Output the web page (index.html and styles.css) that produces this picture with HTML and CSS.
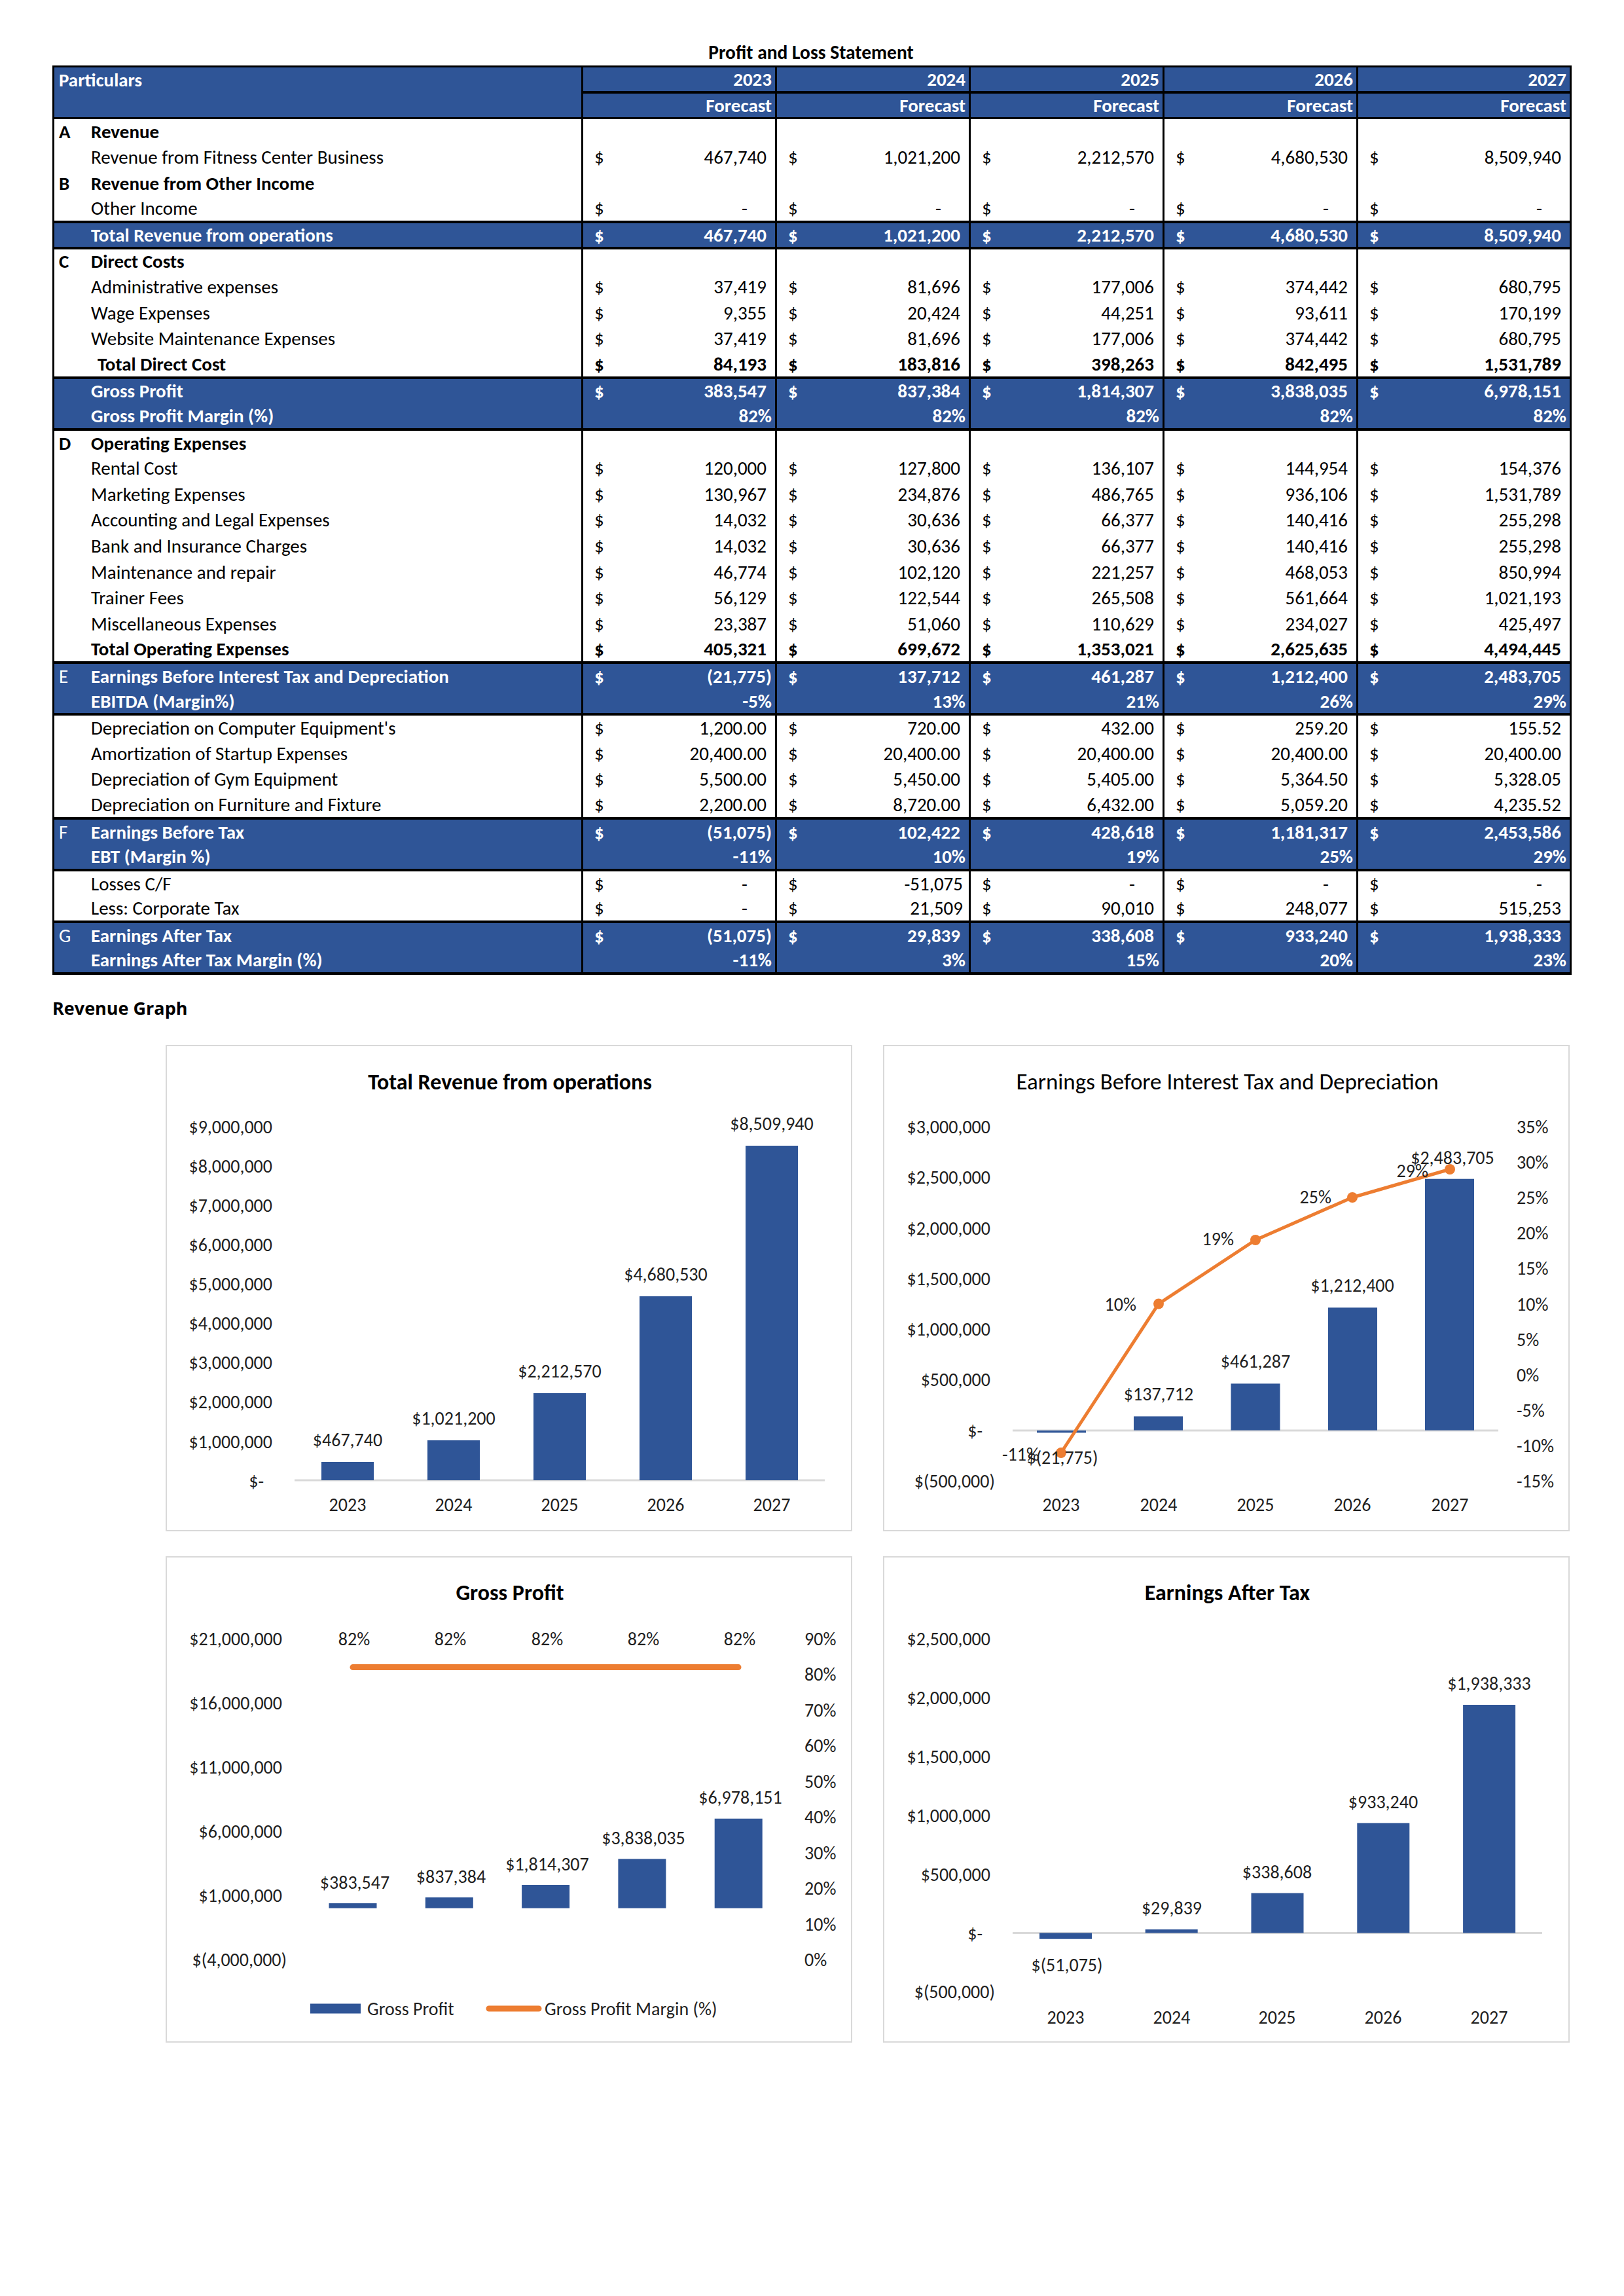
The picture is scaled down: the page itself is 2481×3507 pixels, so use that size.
FILE: index.html
```html
<!DOCTYPE html>
<html lang="en">
<head>
    <meta charset="UTF-8">
    <title>Profit and Loss Statement</title>
    <link rel="stylesheet" href="styles.css">
</head>
<body>
<div class="page">
    <div class="sheet-title">Profit and Loss Statement</div>

    <table class="pl">
        <colgroup>
            <col class="c-part"><col class="c-yr"><col class="c-yr"><col class="c-yr"><col class="c-yr"><col class="c-last">
        </colgroup>
        <thead>
            <tr class="head1">
                <th class="part" rowspan="2">Particulars</th>
                <th>2023</th><th>2024</th><th>2025</th><th>2026</th><th>2027</th>
            </tr>
            <tr class="head2">
                <th>Forecast</th><th>Forecast</th><th>Forecast</th><th>Forecast</th><th>Forecast</th>
            </tr>
        </thead>
        <tbody>
            <tr class="sec"><td><span class="ltr">A</span>Revenue</td><td></td><td></td><td></td><td></td><td></td></tr>
            <tr><td><span class="ltr"></span>Revenue from Fitness Center Business</td>
                <td><span class="cur">$</span>467,740</td><td><span class="cur">$</span>1,021,200</td><td><span class="cur">$</span>2,212,570</td><td><span class="cur">$</span>4,680,530</td><td><span class="cur">$</span>8,509,940</td></tr>
            <tr class="sec"><td><span class="ltr">B</span>Revenue from Other Income</td><td></td><td></td><td></td><td></td><td></td></tr>
            <tr><td><span class="ltr"></span>Other Income</td>
                <td class="dash"><span class="cur">$</span>-</td><td class="dash"><span class="cur">$</span>-</td><td class="dash"><span class="cur">$</span>-</td><td class="dash"><span class="cur">$</span>-</td><td class="dash"><span class="cur">$</span>-</td></tr>
            <tr class="blue bt bb"><td><span class="ltr"></span>Total Revenue from operations</td>
                <td><span class="cur">$</span>467,740</td><td><span class="cur">$</span>1,021,200</td><td><span class="cur">$</span>2,212,570</td><td><span class="cur">$</span>4,680,530</td><td><span class="cur">$</span>8,509,940</td></tr>

            <tr class="sec"><td><span class="ltr">C</span>Direct Costs</td><td></td><td></td><td></td><td></td><td></td></tr>
            <tr><td><span class="ltr"></span>Administrative expenses</td>
                <td><span class="cur">$</span>37,419</td><td><span class="cur">$</span>81,696</td><td><span class="cur">$</span>177,006</td><td><span class="cur">$</span>374,442</td><td><span class="cur">$</span>680,795</td></tr>
            <tr><td><span class="ltr"></span>Wage Expenses</td>
                <td><span class="cur">$</span>9,355</td><td><span class="cur">$</span>20,424</td><td><span class="cur">$</span>44,251</td><td><span class="cur">$</span>93,611</td><td><span class="cur">$</span>170,199</td></tr>
            <tr><td><span class="ltr"></span>Website Maintenance Expenses</td>
                <td><span class="cur">$</span>37,419</td><td><span class="cur">$</span>81,696</td><td><span class="cur">$</span>177,006</td><td><span class="cur">$</span>374,442</td><td><span class="cur">$</span>680,795</td></tr>
            <tr class="total"><td><span class="ltr"></span><span class="indent">Total Direct Cost</span></td>
                <td><span class="cur">$</span>84,193</td><td><span class="cur">$</span>183,816</td><td><span class="cur">$</span>398,263</td><td><span class="cur">$</span>842,495</td><td><span class="cur">$</span>1,531,789</td></tr>
            <tr class="blue bt"><td><span class="ltr"></span>Gross Profit</td>
                <td><span class="cur">$</span>383,547</td><td><span class="cur">$</span>837,384</td><td><span class="cur">$</span>1,814,307</td><td><span class="cur">$</span>3,838,035</td><td><span class="cur">$</span>6,978,151</td></tr>
            <tr class="blue bb"><td><span class="ltr"></span>Gross Profit Margin (%)</td>
                <td class="pct">82%</td><td class="pct">82%</td><td class="pct">82%</td><td class="pct">82%</td><td class="pct">82%</td></tr>

            <tr class="sec"><td><span class="ltr">D</span>Operating Expenses</td><td></td><td></td><td></td><td></td><td></td></tr>
            <tr><td><span class="ltr"></span>Rental Cost</td>
                <td><span class="cur">$</span>120,000</td><td><span class="cur">$</span>127,800</td><td><span class="cur">$</span>136,107</td><td><span class="cur">$</span>144,954</td><td><span class="cur">$</span>154,376</td></tr>
            <tr><td><span class="ltr"></span>Marketing Expenses</td>
                <td><span class="cur">$</span>130,967</td><td><span class="cur">$</span>234,876</td><td><span class="cur">$</span>486,765</td><td><span class="cur">$</span>936,106</td><td><span class="cur">$</span>1,531,789</td></tr>
            <tr><td><span class="ltr"></span>Accounting and Legal Expenses</td>
                <td><span class="cur">$</span>14,032</td><td><span class="cur">$</span>30,636</td><td><span class="cur">$</span>66,377</td><td><span class="cur">$</span>140,416</td><td><span class="cur">$</span>255,298</td></tr>
            <tr><td><span class="ltr"></span>Bank and Insurance Charges</td>
                <td><span class="cur">$</span>14,032</td><td><span class="cur">$</span>30,636</td><td><span class="cur">$</span>66,377</td><td><span class="cur">$</span>140,416</td><td><span class="cur">$</span>255,298</td></tr>
            <tr><td><span class="ltr"></span>Maintenance and repair</td>
                <td><span class="cur">$</span>46,774</td><td><span class="cur">$</span>102,120</td><td><span class="cur">$</span>221,257</td><td><span class="cur">$</span>468,053</td><td><span class="cur">$</span>850,994</td></tr>
            <tr><td><span class="ltr"></span>Trainer Fees</td>
                <td><span class="cur">$</span>56,129</td><td><span class="cur">$</span>122,544</td><td><span class="cur">$</span>265,508</td><td><span class="cur">$</span>561,664</td><td><span class="cur">$</span>1,021,193</td></tr>
            <tr><td><span class="ltr"></span>Miscellaneous Expenses</td>
                <td><span class="cur">$</span>23,387</td><td><span class="cur">$</span>51,060</td><td><span class="cur">$</span>110,629</td><td><span class="cur">$</span>234,027</td><td><span class="cur">$</span>425,497</td></tr>
            <tr class="total"><td><span class="ltr"></span>Total Operating Expenses</td>
                <td><span class="cur">$</span>405,321</td><td><span class="cur">$</span>699,672</td><td><span class="cur">$</span>1,353,021</td><td><span class="cur">$</span>2,625,635</td><td><span class="cur">$</span>4,494,445</td></tr>

            <tr class="blue bt"><td><span class="ltr">E</span>Earnings Before Interest Tax and Depreciation</td>
                <td class="neg"><span class="cur">$</span>(21,775)</td><td><span class="cur">$</span>137,712</td><td><span class="cur">$</span>461,287</td><td><span class="cur">$</span>1,212,400</td><td><span class="cur">$</span>2,483,705</td></tr>
            <tr class="blue bb"><td><span class="ltr"></span>EBITDA (Margin%)</td>
                <td class="pct">-5%</td><td class="pct">13%</td><td class="pct">21%</td><td class="pct">26%</td><td class="pct">29%</td></tr>
            <tr><td><span class="ltr"></span>Depreciation on Computer Equipment's</td>
                <td><span class="cur">$</span>1,200.00</td><td><span class="cur">$</span>720.00</td><td><span class="cur">$</span>432.00</td><td><span class="cur">$</span>259.20</td><td><span class="cur">$</span>155.52</td></tr>
            <tr><td><span class="ltr"></span>Amortization of Startup Expenses</td>
                <td><span class="cur">$</span>20,400.00</td><td><span class="cur">$</span>20,400.00</td><td><span class="cur">$</span>20,400.00</td><td><span class="cur">$</span>20,400.00</td><td><span class="cur">$</span>20,400.00</td></tr>
            <tr><td><span class="ltr"></span>Depreciation of Gym Equipment</td>
                <td><span class="cur">$</span>5,500.00</td><td><span class="cur">$</span>5,450.00</td><td><span class="cur">$</span>5,405.00</td><td><span class="cur">$</span>5,364.50</td><td><span class="cur">$</span>5,328.05</td></tr>
            <tr><td><span class="ltr"></span>Depreciation on Furniture and Fixture</td>
                <td><span class="cur">$</span>2,200.00</td><td><span class="cur">$</span>8,720.00</td><td><span class="cur">$</span>6,432.00</td><td><span class="cur">$</span>5,059.20</td><td><span class="cur">$</span>4,235.52</td></tr>

            <tr class="blue bt"><td><span class="ltr">F</span>Earnings Before Tax</td>
                <td class="neg"><span class="cur">$</span>(51,075)</td><td><span class="cur">$</span>102,422</td><td><span class="cur">$</span>428,618</td><td><span class="cur">$</span>1,181,317</td><td><span class="cur">$</span>2,453,586</td></tr>
            <tr class="blue bb"><td><span class="ltr"></span>EBT (Margin %)</td>
                <td class="pct">-11%</td><td class="pct">10%</td><td class="pct">19%</td><td class="pct">25%</td><td class="pct">29%</td></tr>
            <tr><td><span class="ltr"></span>Losses C/F</td>
                <td class="dash"><span class="cur">$</span>-</td><td class="gen"><span class="cur">$</span>-51,075</td><td class="dash"><span class="cur">$</span>-</td><td class="dash"><span class="cur">$</span>-</td><td class="dash"><span class="cur">$</span>-</td></tr>
            <tr><td><span class="ltr"></span>Less: Corporate Tax</td>
                <td class="dash"><span class="cur">$</span>-</td><td class="gen"><span class="cur">$</span>21,509</td><td><span class="cur">$</span>90,010</td><td><span class="cur">$</span>248,077</td><td><span class="cur">$</span>515,253</td></tr>

            <tr class="blue bt"><td><span class="ltr">G</span>Earnings After Tax</td>
                <td class="neg"><span class="cur">$</span>(51,075)</td><td><span class="cur">$</span>29,839</td><td><span class="cur">$</span>338,608</td><td><span class="cur">$</span>933,240</td><td><span class="cur">$</span>1,938,333</td></tr>
            <tr class="blue bb"><td><span class="ltr"></span>Earnings After Tax Margin (%)</td>
                <td class="pct">-11%</td><td class="pct">3%</td><td class="pct">15%</td><td class="pct">20%</td><td class="pct">23%</td></tr>
        </tbody>
    </table>

    <h2 class="graph-title">Revenue Graph</h2>

    <div class="charts">
        <!-- Total Revenue -->
        <div class="chart">
            <svg width="1045" height="739" viewBox="0 0 1045 739">
                <text class="ttl bold" x="524" y="54">Total Revenue from operations</text>
                <g class="axl">
                    <text x="161" y="123">$9,000,000</text>
                    <text x="161" y="183">$8,000,000</text>
                    <text x="161" y="243">$7,000,000</text>
                    <text x="161" y="303">$6,000,000</text>
                    <text x="161" y="363">$5,000,000</text>
                    <text x="161" y="423">$4,000,000</text>
                    <text x="161" y="483">$3,000,000</text>
                    <text x="161" y="543">$2,000,000</text>
                    <text x="161" y="604">$1,000,000</text>
                    <text x="148" y="664">$-</text>
                </g>
                <line class="axis" x1="195" y1="663" x2="1005" y2="663"/>
                <g class="bar">
                    <rect x="236" y="635" width="80" height="28"/>
                    <rect x="398" y="602" width="80" height="61"/>
                    <rect x="560" y="530" width="80" height="133"/>
                    <rect x="722" y="382" width="80" height="281"/>
                    <rect x="884" y="152" width="80" height="511"/>
                </g>
                <g class="lbl">
                    <text x="276" y="601">$467,740</text>
                    <text x="438" y="568">$1,021,200</text>
                    <text x="600" y="496">$2,212,570</text>
                    <text x="762" y="348">$4,680,530</text>
                    <text x="924" y="118">$8,509,940</text>
                </g>
                <g class="lbl">
                    <text x="276" y="700">2023</text>
                    <text x="438" y="700">2024</text>
                    <text x="600" y="700">2025</text>
                    <text x="762" y="700">2026</text>
                    <text x="924" y="700">2027</text>
                </g>
            </svg>
        </div>

        <!-- EBITDA -->
        <div class="chart">
            <svg width="1045" height="739" viewBox="0 0 1045 739">
                <text class="ttl" x="524" y="54">Earnings Before Interest Tax and Depreciation</text>
                <g class="axl">
                    <text x="162" y="123">$3,000,000</text>
                    <text x="162" y="200">$2,500,000</text>
                    <text x="162" y="278">$2,000,000</text>
                    <text x="162" y="355">$1,500,000</text>
                    <text x="162" y="432">$1,000,000</text>
                    <text x="162" y="509">$500,000</text>
                    <text x="150" y="587">$-</text>
                    <text x="169" y="664">$(500,000)</text>
                </g>
                <g class="axr">
                    <text x="966" y="123">35%</text>
                    <text x="966" y="177">30%</text>
                    <text x="966" y="231">25%</text>
                    <text x="966" y="285">20%</text>
                    <text x="966" y="339">15%</text>
                    <text x="966" y="394">10%</text>
                    <text x="966" y="448">5%</text>
                    <text x="966" y="502">0%</text>
                    <text x="966" y="556">-5%</text>
                    <text x="966" y="610">-10%</text>
                    <text x="966" y="664">-15%</text>
                </g>
                <line class="axis" x1="196" y1="587" x2="938" y2="587"/>
                <g class="bar">
                    <rect x="233" y="587" width="75" height="3.4"/>
                    <rect x="381" y="565.4" width="75" height="21.3"/>
                    <rect x="529.5" y="515.4" width="75" height="71.3"/>
                    <rect x="678" y="399.3" width="75" height="187.4"/>
                    <rect x="826" y="202.7" width="75" height="384"/>
                </g>
                <polyline class="ln" points="270,621 419,393.5 567,296 715,231 864,188"/>
                <g class="dot">
                    <circle cx="270" cy="621" r="8"/>
                    <circle cx="419" cy="393.5" r="8"/>
                    <circle cx="567" cy="296" r="8"/>
                    <circle cx="715" cy="231" r="8"/>
                    <circle cx="864" cy="188" r="8"/>
                </g>
                <g class="lbl">
                    <text x="272" y="628">$(21,775)</text>
                    <text x="419" y="531">$137,712</text>
                    <text x="567" y="481">$461,287</text>
                    <text x="715" y="365">$1,212,400</text>
                    <text x="868" y="170">$2,483,705</text>
                </g>
                <g class="lbl-l">
                    <text x="237" y="623">-11%</text>
                    <text x="385" y="394">10%</text>
                    <text x="534" y="294">19%</text>
                    <text x="683" y="230">25%</text>
                    <text x="831" y="190">29%</text>
                </g>
                <g class="lbl">
                    <text x="270" y="700">2023</text>
                    <text x="419" y="700">2024</text>
                    <text x="567" y="700">2025</text>
                    <text x="715" y="700">2026</text>
                    <text x="864" y="700">2027</text>
                </g>
            </svg>
        </div>

        <!-- Gross Profit -->
        <div class="chart">
            <svg width="1045" height="739" viewBox="0 0 1045 739">
                <text class="ttl bold" x="524" y="53">Gross Profit</text>
                <g class="axl">
                    <text x="176" y="124">$21,000,000</text>
                    <text x="176" y="222">$16,000,000</text>
                    <text x="176" y="320">$11,000,000</text>
                    <text x="176" y="418">$6,000,000</text>
                    <text x="176" y="516">$1,000,000</text>
                    <text x="183" y="614">$(4,000,000)</text>
                </g>
                <g class="axr">
                    <text x="974" y="124">90%</text>
                    <text x="974" y="178">80%</text>
                    <text x="974" y="233">70%</text>
                    <text x="974" y="287">60%</text>
                    <text x="974" y="342">50%</text>
                    <text x="974" y="396">40%</text>
                    <text x="974" y="451">30%</text>
                    <text x="974" y="505">20%</text>
                    <text x="974" y="560">10%</text>
                    <text x="974" y="614">0%</text>
                </g>
                <g class="bar">
                    <rect x="247.5" y="528.1" width="73" height="7.5"/>
                    <rect x="394.8" y="519.2" width="73" height="16.4"/>
                    <rect x="542.1" y="500" width="73" height="35.6"/>
                    <rect x="689.4" y="460.4" width="73" height="75.2"/>
                    <rect x="836.7" y="398.8" width="73" height="136.8"/>
                </g>
                <line class="ln thick" x1="284" y1="167.6" x2="873" y2="167.6"/>
                <g class="lbl">
                    <text x="287" y="496">$383,547</text>
                    <text x="434" y="487">$837,384</text>
                    <text x="581" y="468">$1,814,307</text>
                    <text x="728" y="428">$3,838,035</text>
                    <text x="876" y="366">$6,978,151</text>
                </g>
                <g class="lbl">
                    <text x="286" y="124">82%</text>
                    <text x="433" y="124">82%</text>
                    <text x="581" y="124">82%</text>
                    <text x="728" y="124">82%</text>
                    <text x="875" y="124">82%</text>
                </g>
                <rect class="bar" x="219" y="681.5" width="77" height="15"/>
                <text class="leg" x="306" y="689">Gross Profit</text>
                <line class="ln thick" x1="492" y1="689" x2="568" y2="689"/>
                <text class="leg" x="577" y="689">Gross Profit Margin (%)</text>
            </svg>
        </div>

        <!-- Earnings After Tax -->
        <div class="chart">
            <svg width="1045" height="739" viewBox="0 0 1045 739">
                <text class="ttl bold" x="524" y="53">Earnings After Tax</text>
                <g class="axl">
                    <text x="162" y="124">$2,500,000</text>
                    <text x="162" y="214">$2,000,000</text>
                    <text x="162" y="304">$1,500,000</text>
                    <text x="162" y="394">$1,000,000</text>
                    <text x="162" y="484">$500,000</text>
                    <text x="150" y="574">$-</text>
                    <text x="169" y="663">$(500,000)</text>
                </g>
                <line class="axis" x1="196" y1="573.5" x2="1005" y2="573.5"/>
                <g class="bar">
                    <rect x="237" y="573.5" width="80" height="9.2"/>
                    <rect x="398.7" y="568.1" width="80" height="5.4"/>
                    <rect x="560.5" y="512.6" width="80" height="60.9"/>
                    <rect x="722.3" y="405.7" width="80" height="167.8"/>
                    <rect x="884.1" y="225" width="80" height="348.5"/>
                </g>
                <g class="lbl">
                    <text x="279" y="622">$(51,075)</text>
                    <text x="439" y="535">$29,839</text>
                    <text x="600" y="480">$338,608</text>
                    <text x="762" y="373">$933,240</text>
                    <text x="924" y="192">$1,938,333</text>
                </g>
                <g class="lbl">
                    <text x="277" y="702">2023</text>
                    <text x="439" y="702">2024</text>
                    <text x="600" y="702">2025</text>
                    <text x="762" y="702">2026</text>
                    <text x="924" y="702">2027</text>
                </g>
            </svg>
        </div>
    </div>
</div>
</body>
</html>
```

FILE: styles.css
```css
body {
    margin: 0;
    padding: 0;
    background: #fff;
    color: #000;
    font-family: Carlito, Lato, "Liberation Sans", sans-serif;
}
.page {
    width: 2318px;
    padding: 62px 0 0 80px;
}
.sheet-title {
    text-align: center;
    font-weight: bold;
    font-size: 29.5px;
    line-height: 36px;
    height: 38px;
}

/* table */
.pl {
    width: 2318px;
    table-layout: fixed;
    border-collapse: collapse;
    border: 3px solid #000;
    font-size: 29px;
}
.c-part { width: 808px; }
.c-yr { width: 296px; }
.c-last { width: 326px; }
.pl tr {
    height: 39.6px;
}
.pl th, .pl td {
    padding: 0 13px 0 17px;
    line-height: 30px;
    white-space: nowrap;
    vertical-align: middle;
}
.pl td:first-child {
    padding-left: 7px;
    text-align: left;
}
.pl td + td, .pl th + th {
    border-left: 3px solid #000;
    text-align: right;
}
.pl th {
    background: #2f5597;
    color: #fff;
    font-weight: bold;
    text-align: right;
    padding-right: 5px;
}
.pl th.part {
    text-align: left;
    vertical-align: top;
    padding-left: 7px;
    padding-top: 4px;
    border-right: 3px solid #000;
    border-bottom: 3px solid #000;
}
.head1 th {
    border-bottom: 4px solid #000;
}
.head2 th {
    border-bottom: 3px solid #000;
}
.ltr {
    display: inline-block;
    width: 49px;
}
.indent {
    padding-left: 10px;
}
.cur {
    float: left;
}
.sec td, .total td {
    font-weight: bold;
}
.blue td {
    background: #2f5597;
    color: #fff;
    font-weight: bold;
}
.blue td:first-child .ltr {
    font-weight: normal;
}
.bt td {
    border-top: 4px solid #000;
}
.bb td {
    border-bottom: 4px solid #000;
}
.pl td.pct, .pl td.neg {
    padding-right: 5px;
}
.pl td.gen {
    padding-right: 9px;
}
.pl td.dash {
    padding-right: 42px;
}

/* graphs */
.graph-title {
    font-family: "Open Sans", sans-serif;
    font-weight: bold;
    font-size: 27px;
    line-height: 36px;
    margin: 33px 0 0 0;
}
.charts {
    display: grid;
    grid-template-columns: 1049px 1049px;
    column-gap: 47px;
    row-gap: 38px;
    margin: 38px 0 0 173px;
}
.chart {
    width: 1049px;
    height: 743px;
    box-sizing: border-box;
    border: 2px solid #d9d9d9;
}
.chart svg {
    display: block;
}
.chart text {
    font-family: Carlito, Lato, "Liberation Sans", sans-serif;
    font-size: 28px;
    fill: #1f1f1f;
    dominant-baseline: central;
}
.chart .ttl {
    font-size: 35px;
    text-anchor: middle;
    fill: #000;
}
.chart .bold {
    font-size: 34px;
    font-weight: bold;
}
.axl text {
    text-anchor: end;
}
.axr text {
    text-anchor: start;
}
.lbl text {
    text-anchor: middle;
}
.lbl-l text {
    text-anchor: end;
}
.chart .leg {
    text-anchor: start;
}
.axis {
    stroke: #d9d9d9;
    stroke-width: 3;
}
.bar rect, rect.bar {
    fill: #2f5597;
}
.ln {
    fill: none;
    stroke: #ed7d31;
    stroke-width: 5;
    stroke-linejoin: round;
}
.ln.thick {
    stroke-width: 9;
    stroke-linecap: round;
}
.dot circle {
    fill: #ed7d31;
}
```
